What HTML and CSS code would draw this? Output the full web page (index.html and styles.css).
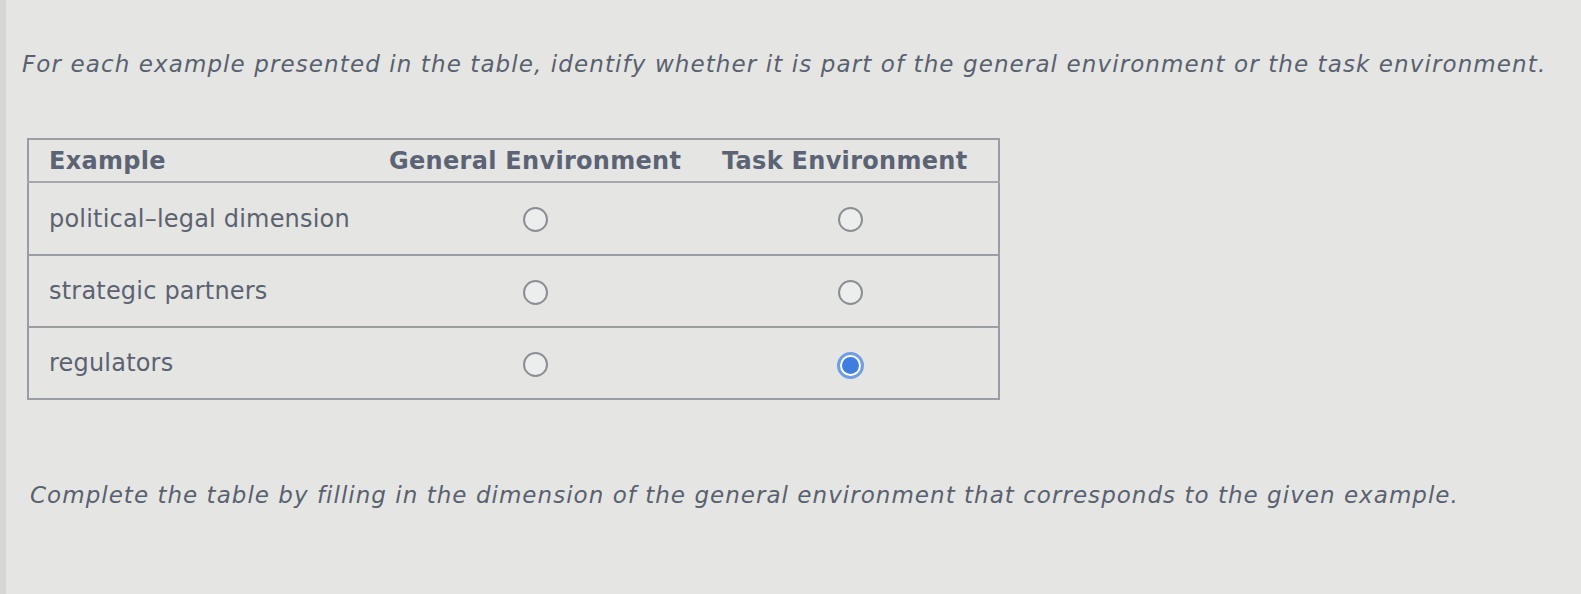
FILE: index.html
```html
<!DOCTYPE html>
<html>
<head>
<meta charset="utf-8">
<link rel="stylesheet" href="styles.css">
</head>
<body>
<div class="page">
  <p class="prompt">For each example presented in the table, identify whether it is part of the general environment or the task environment.</p>
  <table class="grid">
    <colgroup>
      <col class="c1">
      <col class="c2">
      <col class="c3">
    </colgroup>
    <thead>
      <tr>
        <th>Example</th>
        <th>General Environment</th>
        <th>Task Environment</th>
      </tr>
    </thead>
    <tbody>
      <tr class="r1">
        <td class="col-ex">political–legal dimension</td>
        <td class="col-opt"><span class="radio"></span></td>
        <td class="col-opt"><span class="radio"></span></td>
      </tr>
      <tr class="r2">
        <td class="col-ex">strategic partners</td>
        <td class="col-opt"><span class="radio"></span></td>
        <td class="col-opt"><span class="radio"></span></td>
      </tr>
      <tr class="r3">
        <td class="col-ex">regulators</td>
        <td class="col-opt"><span class="radio"></span></td>
        <td class="col-opt"><span class="radio checked"></span></td>
      </tr>
    </tbody>
  </table>
  <p class="prompt second">Complete the table by filling in the dimension of the general environment that corresponds to the given example.</p>
</div>
</body>
</html>
```
FILE: styles.css
```css
html, body {
  margin: 0;
  padding: 0;
  background: #e5e6e3;
}
body {
  font-family: "DejaVu Sans", Verdana, sans-serif;
  color: #5b6170;
}
.page {
  padding: 51px 0 0 16px;
  height: 594px;
  box-sizing: border-box;
  border-left: 6px solid #d6d7d4;
}
.prompt {
  margin: 0;
  font-size: 23px;
  letter-spacing: 1.1px;
  font-style: italic;
  line-height: 27px;
  color: #596070;
  white-space: nowrap;
}
.prompt.second {
  margin-top: 82px;
  margin-left: 8px;
  letter-spacing: 1.03px;
}
.grid {
  margin-top: 60px;
  margin-left: 5px;
  border-collapse: collapse;
  table-layout: fixed;
  width: 971px;
  border: 2px solid #9a9da3;
}
.c1 { width: 341px; }
.c2 { width: 333px; }
.c3 { width: 297px; }
.grid th {
  font-size: 24px;
  letter-spacing: 0.3px;
  font-weight: bold;
  color: #5b6374;
  height: 41px;
  padding: 0 0 0 20px;
  text-align: left;
  white-space: nowrap;
  border-bottom: 2px solid #a4a7ac;
}
.grid td {
  font-size: 24px;
  letter-spacing: 0.2px;
  color: #5c6270;
  padding: 0 0 0 20px;
  border-bottom: 2px solid #9a9da3;
}
.r1 td { height: 71px; }
.r2 td { height: 70px; }
.r3 td { height: 70px; }
.grid td.col-opt {
  text-align: center;
  padding: 0;
}
.radio {
  display: inline-block;
  width: 25px;
  height: 25px;
  border: 2px solid #8b8e93;
  border-radius: 50%;
  vertical-align: middle;
  background: #eceded;
  box-sizing: border-box;
  position: relative;
}
.radio.checked {
  width: 27px;
  height: 27px;
  border: 3px solid #6f9ee6;
  background: #ffffff;
  top: 2px;
}
.radio.checked::after {
  content: "";
  position: absolute;
  left: 2px;
  top: 2px;
  width: 17px;
  height: 17px;
  border-radius: 50%;
  background: #3f7ee0;
}
```
